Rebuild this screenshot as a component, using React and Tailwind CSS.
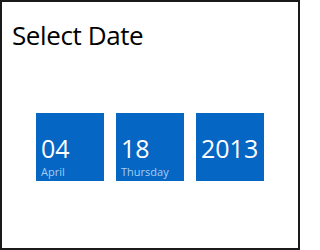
import React from 'react'

const tiles = [
  { value: '04', label: 'April' },
  { value: '18', label: 'Thursday' },
  { value: '2013', label: '' },
]

function DateTile({ value, label }) {
  return (
    <div className="w-[68px] h-[68px] bg-[#0566c4] flex flex-col justify-end px-[5px] pb-[3px]">
      <div className="text-white text-[25px] leading-[27px] mb-[3px]">{value}</div>
      <div className="text-[#a6cdf3] text-[11px] leading-[13px] h-[13px]">{label}</div>
    </div>
  )
}

export default function App() {
  return (
    <div
      className="w-[300px] h-[250px] bg-white border-2 border-[#1a1a1a] flex flex-col"
      style={{ fontFamily: '"Open Sans", "Noto Sans", sans-serif' }}
    >
      <h1 className="text-[26px] leading-[32px] text-black pl-[10px] pt-[17px] tracking-[-0.4px]">Select Date</h1>
      <div className="flex gap-3 pl-[34px] mt-[62px]">
        {tiles.map((t) => (
          <DateTile key={t.value} value={t.value} label={t.label} />
        ))}
      </div>
    </div>
  )
}
